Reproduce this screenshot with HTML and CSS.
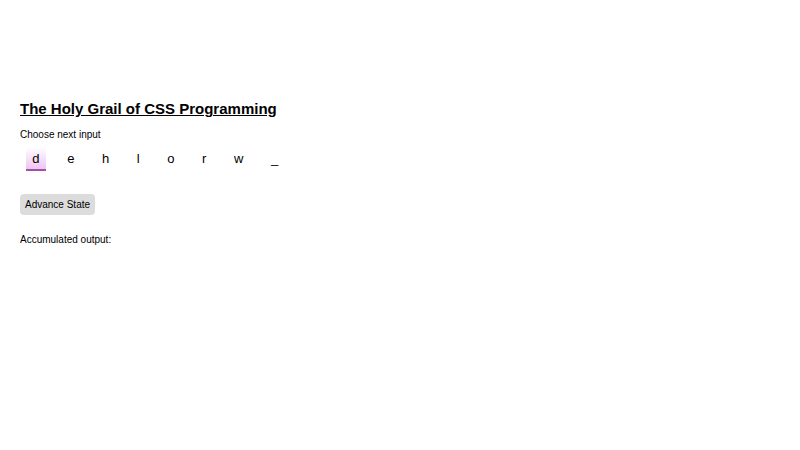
FILE: index.html
```html
<!DOCTYPE html>
<html>
<head>
<meta charset="utf-8">
<link rel="stylesheet" href="styles.css">
</head>
<body>
<main class="page">
  <h1 class="title">The Holy Grail of CSS Programming</h1>
  <p class="label">Choose next input</p>
  <div class="inputs">
    <span class="key active">d</span>
    <span class="key">e</span>
    <span class="key">h</span>
    <span class="key">l</span>
    <span class="key">o</span>
    <span class="key">r</span>
    <span class="key">w</span>
    <span class="key">_</span>
  </div>
  <button class="advance">Advance State</button>
  <p class="output">Accumulated output:</p>
</main>
</body>
</html>
```
FILE: styles.css
```css
html, body {
  margin: 0;
  background: #fff;
}
body {
  font-family: "Liberation Sans", Arial, sans-serif;
  color: #000;
}
.page {
  padding: 99px 20px 20px;
}
.title {
  font-size: 15px;
  font-weight: bold;
  text-decoration: underline;
  margin: 0 0 8px;
  line-height: 20px;
}
.label {
  font-size: 10px;
  margin: 0 0 4px;
  line-height: 16px;
}
.inputs {
  display: flex;
  gap: 15px;
  padding-left: 6px;
  margin-bottom: 23px;
}
.key {
  height: 22px;
  padding: 0 6.3px;
  display: flex;
  align-items: center;
  justify-content: center;
  font-size: 13px;
  border-bottom: 2px solid transparent;
}
.key.active {
  background: linear-gradient(#fff, #f0c4f2);
  border-bottom-color: #a050a8;
}
.advance {
  display: block;
  font-family: inherit;
  font-size: 10px;
  background: #dcdcdc;
  border: none;
  border-radius: 4px;
  padding: 0 5px;
  height: 21px;
  color: #000;
  margin-bottom: 17px;
}
.output {
  font-size: 10px;
  margin: 0;
  line-height: 16px;
}
```
